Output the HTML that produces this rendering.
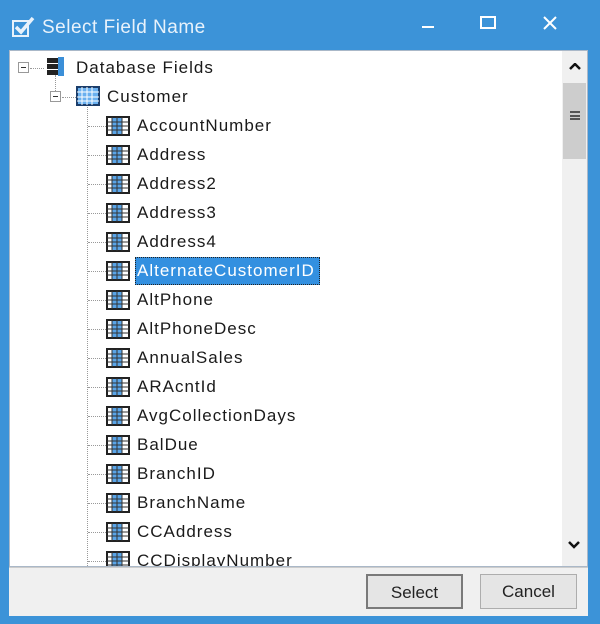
<!DOCTYPE html>
<html><head><style>
*{margin:0;padding:0;box-sizing:border-box}
body{width:600px;height:624px;background:#3c93d8;position:relative;overflow:hidden;font-family:"Liberation Sans",sans-serif}
.title{position:absolute;left:42px;top:17px;color:#e8f2fb;font-size:19px;letter-spacing:0.5px}
.panel{position:absolute;left:9px;top:50px;width:579px;height:517px;background:#fff;border:1px solid #aab8c8;overflow:hidden}
.bottom{position:absolute;left:9px;top:567px;width:579px;height:49px;background:#f0f0f0;border-top:1px solid #ccc}
.btn{position:absolute;top:6px;height:35px;width:97px;border:1px solid #adadad;background:#e5e5e5;font-size:17px;text-align:center;line-height:33px;color:#222}
.sb{position:absolute;right:0;top:0;width:25px;height:515px;background:#f0f0f0}
.thumb{position:absolute;left:1px;top:32px;width:23px;height:76px;background:#cdcdcd}
.row{position:absolute;font-size:17px;letter-spacing:1px;color:#1a1a1a;height:27px;line-height:27px;white-space:nowrap}
.ic{position:absolute;width:24px;height:22px}
.hl{position:absolute;border-top:1px dotted #999;height:0}
.vl{position:absolute;border-left:1px dotted #999;width:0}
.box{position:absolute;width:11px;height:11px;border:1px solid #999;background:#fff}
.box:after{content:"";position:absolute;left:2px;top:4px;width:5px;height:1px;background:#333}
</style></head><body>
<svg style="position:absolute;left:12px;top:16px" width="24" height="22" viewBox="0 0 24 22"><rect x="1" y="5" width="15" height="15" fill="none" stroke="#e8f2fb" stroke-width="2"/><path d="M4 11 L9 16 L21 2" fill="none" stroke="#e8f2fb" stroke-width="3.5"/></svg>
<div class="title">Select Field Name</div>
<div style="position:absolute;left:422px;top:26px;width:12px;height:2px;background:#fff"></div>
<div style="position:absolute;left:480px;top:16px;width:16px;height:13px;border:2px solid #fff"></div>
<svg style="position:absolute;left:543px;top:16px" width="14" height="14"><path d="M1 1L13 13M13 1L1 13" stroke="#fff" stroke-width="2"/></svg>
<div class="panel">
<div style="position:absolute;left:125px;top:206px;width:185px;height:28px;background:#3390e0;border:1px dotted #222"></div>
<div class="vl" style="left:45px;top:24px;height:22px"></div>
<div class="vl" style="left:77px;top:53px;height:470px"></div>
<div class="hl" style="left:20px;top:17px;width:14px"></div>
<div class="hl" style="left:52px;top:46px;width:14px"></div>
<div class="box" style="left:8px;top:11px"></div>
<div class="box" style="left:40px;top:40px"></div>
<svg class="ic" style="left:35px;top:5px" width="24" height="22"><rect x="2" y="2" width="11" height="5" fill="#222"/><rect x="2" y="8" width="11" height="5" fill="#222"/><rect x="2" y="14" width="11" height="5" fill="#222"/><rect x="13" y="1" width="6" height="19" fill="#3b8fd8"/></svg>
<div class="row" style="left:66px;top:3px">Database Fields</div>
<svg class="ic" style="left:66px;top:34px"><rect x="1" y="2" width="22" height="18" fill="#6ab0ef" stroke="#1b3d6a" stroke-width="2"/><path d="M1 7H23M6 2V20M11 2V20M16 2V20M1 12H23M1 16H23" stroke="#fff" stroke-width="1"/></svg>
<div class="row" style="left:97px;top:32px">Customer</div>
<div id="f"></div>
<div class="sb">
<svg style="position:absolute;left:7px;top:12px" width="12" height="8"><path d="M1 6L6 1L11 6" fill="none" stroke="#111" stroke-width="2.5"/></svg>
<div class="thumb"><div style="position:absolute;left:7px;top:28px;width:10px;height:9px;border-top:2px solid #555;border-bottom:2px solid #555"><div style="margin-top:2px;height:2px;background:#555"></div></div></div>
<svg style="position:absolute;left:6px;top:490px" width="12" height="8"><path d="M1 1L6 6L11 1" fill="none" stroke="#111" stroke-width="2.5"/></svg></div>
</div>
<div class="bottom"><div class="btn" style="left:357px;border:2px solid #7a7a7a">Select</div><div class="btn" style="left:471px">Cancel</div></div>
<script>
var n=["AccountNumber","Address","Address2","Address3","Address4","AlternateCustomerID","AltPhone","AltPhoneDesc","AnnualSales","ARAcntId","AvgCollectionDays","BalDue","BranchID","BranchName","CCAddress","CCDisplayNumber"],h="";
n.forEach(function(s,i){var t=61+29*i;
h+='<div class="hl" style="left:78px;top:'+(t+14)+'px;width:18px"></div><svg class="ic" style="left:96px;top:'+(t+3)+'px"><rect x="1" y="2" width="22" height="18" fill="#fff" stroke="#222" stroke-width="2"/><rect x="6" y="3" width="10" height="16" fill="#5aa5e8"/><path d="M1 7H23M1 11H23M1 15H23M6 2V20M11 2V20M16 2V20" stroke="#333" stroke-width="1"/></svg><div class="row" style="left:127px;top:'+t+'px;'+(i==5?'color:#fff':'')+'">'+s+'</div>'});
document.getElementById("f").innerHTML=h;
</script>
</body></html>
